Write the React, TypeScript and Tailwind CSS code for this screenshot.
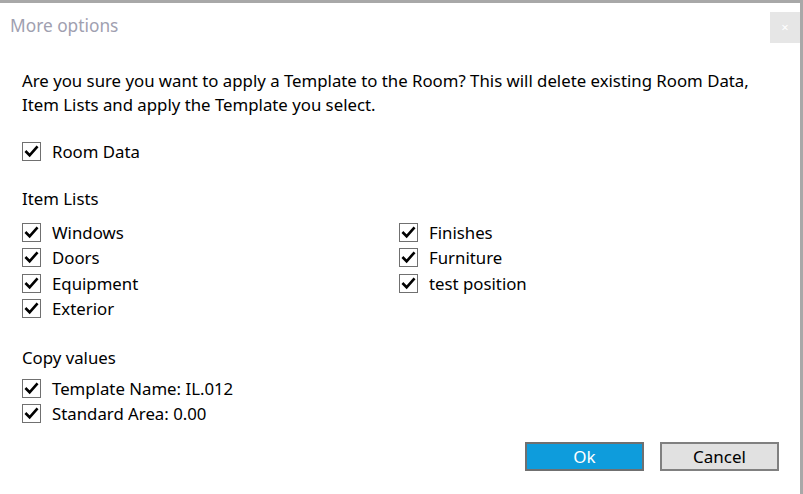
function Box({ label }: { label: string }) {
  return (
    <label className="flex items-center h-[25.5px]">
      <span className="w-[19px] h-[19px] border-[1.5px] border-[#707070] bg-white flex items-center justify-center">
        <svg width="15" height="15" viewBox="0 0 16 16">
          <path d="M2.5 8.5 L6 12 L13.5 3.5" fill="none" stroke="#000" strokeWidth="2.8" strokeLinecap="square" />
        </svg>
      </span>
      <span className="ml-[11px]">{label}</span>
    </label>
  );
}

export default function App() {
  return (
    <div
      className="w-[803px] h-[494px] bg-white border-t-[3px] border-r-[3px] border-[#a8a8a8] flex flex-col text-[16.8px] text-black overflow-hidden"
      style={{ fontFamily: '"Noto Sans", "Open Sans", sans-serif' }}
    >
      <div className="flex items-start justify-between">
        <div className="pl-[10px] pt-[10px] text-[17.3px] text-[#a0a0b0]">More options</div>
        <div className="mt-[9px] w-[30px] h-[31px] bg-[#e6e6e6] flex items-center justify-center text-white text-[13px]">×</div>
      </div>

      <div className="pl-[22px] pr-[20px] pt-[26px] flex flex-col">
        <p className="leading-[24px]">
          Are you sure you want to apply a Template to the Room? This will delete existing Room Data,
          <br />
          Item Lists and apply the Template you select.
        </p>

        <div className="mt-[22px]">
          <Box label="Room Data" />
        </div>

        <div className="mt-[22px] h-[25px] flex items-center">Item Lists</div>
        <div className="grid grid-cols-2 w-[690px] mt-[8px]">
          <div className="flex flex-col">
            <Box label="Windows" />
            <Box label="Doors" />
            <Box label="Equipment" />
            <Box label="Exterior" />
          </div>
          <div className="flex flex-col pl-[32px]">
            <Box label="Finishes" />
            <Box label="Furniture" />
            <Box label="test position" />
          </div>
        </div>

        <div className="mt-[24px] h-[25px] flex items-center">Copy values</div>
        <div className="flex flex-col mt-[5px]">
          <Box label="Template Name: IL.012" />
          <Box label="Standard Area: 0.00" />
        </div>
      </div>

      <div className="flex justify-end gap-[16px] pr-[21px] mt-[15px]">
        <button className="w-[119px] h-[29px] bg-[#0e9cdc] border-2 border-[#707070] text-white text-[17px] leading-none">Ok</button>
        <button className="w-[119px] h-[29px] bg-[#e1e1e1] border-2 border-[#808080] text-black text-[17px] leading-none">Cancel</button>
      </div>
    </div>
  );
}
